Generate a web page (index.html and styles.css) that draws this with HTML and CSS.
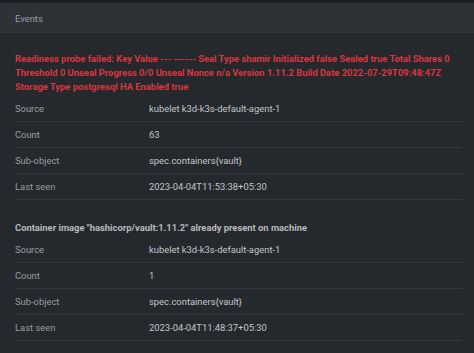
FILE: index.html
```html
<!DOCTYPE html>
<html lang="en">
<head>
  <meta charset="UTF-8">
  <meta name="viewport" content="width=device-width, initial-scale=1.0">
  <title>Events</title>
  <link rel="stylesheet" href="styles.css">
</head>
<body>
  <div class="top-strip"></div>
  <div class="panel">
    <div class="panel-header">Events</div>
    <div class="panel-body">
      <div class="event">
        <div class="event-message error">Readiness probe failed: Key Value --- ------ Seal Type shamir Initialized false Sealed true Total Shares 0 Threshold 0 Unseal Progress 0/0 Unseal Nonce n/a Version 1.11.2 Build Date 2022-07-29T09:48:47Z Storage Type postgresql HA Enabled true</div>
        <div class="row"><span class="label">Source</span><span class="value">kubelet k3d-k3s-default-agent-1</span></div>
        <div class="row"><span class="label">Count</span><span class="value">63</span></div>
        <div class="row"><span class="label">Sub-object</span><span class="value">spec.containers{vault}</span></div>
        <div class="row"><span class="label">Last seen</span><span class="value">2023-04-04T11:53:38+05:30</span></div>
      </div>
      <div class="event">
        <div class="event-message">Container image "hashicorp/vault:1.11.2" already present on machine</div>
        <div class="row"><span class="label">Source</span><span class="value">kubelet k3d-k3s-default-agent-1</span></div>
        <div class="row"><span class="label">Count</span><span class="value">1</span></div>
        <div class="row"><span class="label">Sub-object</span><span class="value">spec.containers{vault}</span></div>
        <div class="row"><span class="label">Last seen</span><span class="value">2023-04-04T11:48:37+05:30</span></div>
      </div>
    </div>
  </div>
</body>
</html>
```

FILE: styles.css
```css
body {
  font-family: Roboto, "Liberation Sans", sans-serif;
  font-size: 9.4px;
  margin: 0;
  padding: 0;
  background: #25282c;
  color: #c3c6ca;
  height: 353px;
  overflow: hidden;
}
.top-strip {
  height: 3px;
  background: #1d2024;
}
.panel-header {
  height: 30px;
  line-height: 31px;
  padding: 0 15px;
  background: #2e3135;
  color: #9a9da2;
}
.panel-body {
  padding: 19px 11px 0 15px;
}
.event {
  margin-bottom: 21px;
}
.event-message {
  font-weight: 700;
  line-height: 14px;
  color: #b7babe;
  padding-bottom: 2px;
}
.event-message.error {
  color: #d9373f;
}
.row {
  display: flex;
  height: 25px;
  align-items: center;
  border-bottom: 1px solid #33363b;
}
.label {
  width: 134px;
  color: #9a9da2;
}
.value {
  color: #c3c6ca;
}
```
